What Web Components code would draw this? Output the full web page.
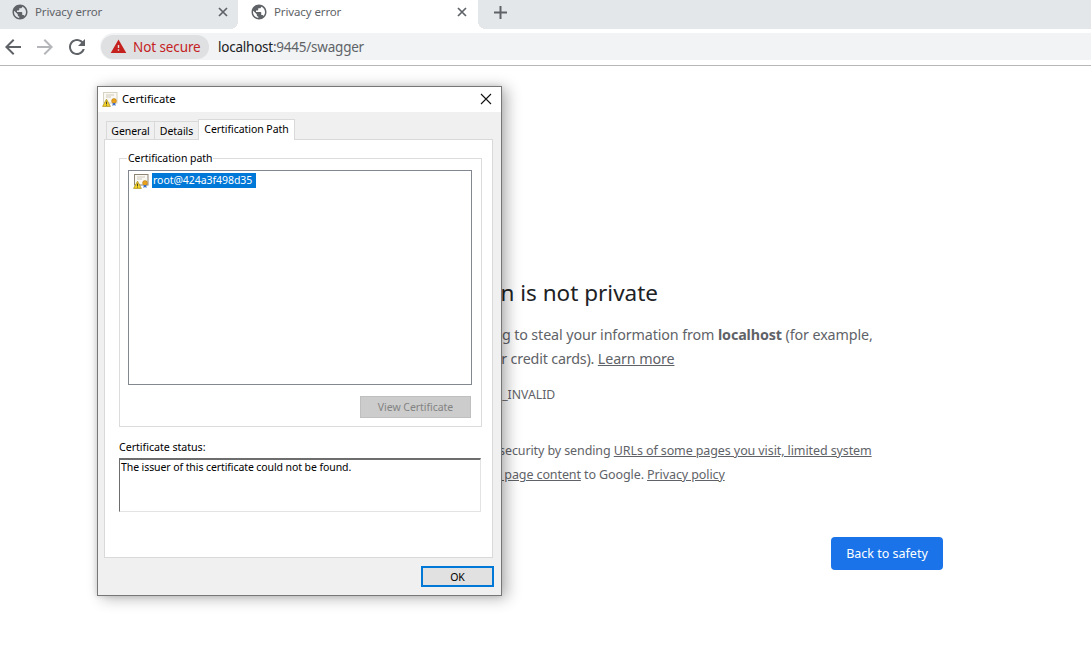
<!DOCTYPE html>
<html lang="en">
<head>
<meta charset="utf-8">
<title>Privacy error</title>
<style>
    html, body { margin: 0; height: 100%; background: #fff; overflow: hidden; }
    body { display: flex; flex-direction: column; font-family: "Noto Sans", sans-serif; position: relative; }
</style>
</head>
<body>
<browser-tabs>
    <browser-tab>Privacy error</browser-tab>
    <browser-tab active>Privacy error</browser-tab>
</browser-tabs>
<browser-toolbar url="localhost" path=":9445/swagger"></browser-toolbar>
<privacy-page></privacy-page>
<cert-dialog></cert-dialog>

<script>
const ICONS = {
    globe: 'M12 2C6.48 2 2 6.48 2 12s4.48 10 10 10 10-4.48 10-10S17.52 2 12 2zm-1 17.93c-3.95-.49-7-3.85-7-7.93 0-.62.08-1.21.21-1.79L9 15v1c0 1.1.9 2 2 2v1.93zm6.9-2.54c-.26-.81-1-1.39-1.9-1.39h-1v-3c0-.55-.45-1-1-1H8v-2h2c.55 0 1-.45 1-1V7h2c1.1 0 2-.9 2-2v-.41c2.93 1.19 5 4.06 5 7.41 0 2.08-.8 3.97-2.1 5.39z',
    back: 'M20 11H7.83l5.59-5.59L12 4l-8 8 8 8 1.41-1.41L7.83 13H20v-2z',
    forward: 'M12 4l-1.41 1.41L16.17 11H4v2h12.17l-5.58 5.59L12 20l8-8z',
    reload: 'M17.65 6.35C16.2 4.9 14.21 4 12 4c-4.42 0-7.99 3.58-7.99 8s3.57 8 7.99 8c3.73 0 6.84-2.55 7.73-6h-2.08c-.82 2.33-3.04 4-5.65 4-3.31 0-6-2.69-6-6s2.69-6 6-6c1.66 0 3.14.69 4.22 1.78L13 11h7V4l-2.35 2.35z',
    warning: 'M1 21h22L12 2 1 21zm12-3h-2v-2h2v2zm0-4h-2v-4h2v4z'
};

function icon(name, size, color) {
    return `<svg width="${size}" height="${size}" viewBox="0 0 24 24" fill="${color}" style="display:block;flex:none"><path d="${ICONS[name]}"/></svg>`;
}

function certIcon(edge) {
    return `<svg width="16" height="16" viewBox="0 0 16 16" style="display:block;flex:none">
        <rect x="1.5" y="1.5" width="13.5" height="10.5" fill="#faf8f2" stroke="${edge}"/>
        <path d="M4 4h8M4 6h5" stroke="#cfcabd"/>
        <circle cx="12" cy="10" r="2.4" fill="#e8a21c" stroke="#b97a10" stroke-width=".6"/>
        <path d="M10.8 12l-.4 3 1.6-1 1.6 1-.4-3z" fill="#3f6fc4"/>
        <path d="M4.5 8.2L.6 15.4h7.8z" fill="#f5d327" stroke="#a88a12" stroke-width=".7"/>
        <path d="M4.5 10.6v2.4M4.5 13.6v.9" stroke="#333" stroke-width=".9"/>
    </svg>`;
}

class BrowserTabs extends HTMLElement {
    constructor() {
        super();
        this.attachShadow({ mode: 'open' });
        this.shadowRoot.innerHTML = `
            <style>
                :host { display: flex; height: 29px; background: #e4e7ea; flex: none; }
                .new {
                    width: 44px; box-sizing: border-box; padding-bottom: 5px;
                    display: flex; align-items: center; justify-content: center;
                }
            </style>
            <slot></slot>
            <div class="new"><svg width="13" height="13" viewBox="0 0 13 13"><path d="M6.5 0v13M0 6.5h13" stroke="#5f6368" stroke-width="2"/></svg></div>
        `;
    }
}

class BrowserTab extends HTMLElement {
    constructor() {
        super();
        this.attachShadow({ mode: 'open' });
        this.shadowRoot.innerHTML = `
            <style>
                :host {
                    display: flex; align-items: center; box-sizing: border-box; position: relative;
                    width: 238px; height: 29px; padding: 0 9px 5px 12px; gap: 8px;
                    font-size: 11.5px; letter-spacing: -.12px; color: #5f6368;
                }
                :host([active]) { width: 240px; padding: 0 10px 5px 13px; background: #fff; }
                :host([active])::before, :host([active])::after {
                    content: ''; position: absolute; bottom: 0; width: 8px; height: 8px;
                }
                :host([active])::before { left: -8px; background: radial-gradient(circle at 0 0, transparent 8px, #fff 8px); }
                :host([active])::after { right: -8px; background: radial-gradient(circle at 100% 0, transparent 8px, #fff 8px); }
                .title { flex: 1; white-space: nowrap; margin-top: -2px; }
                .close { width: 12px; height: 12px; }
            </style>
            ${icon('globe', 18, '#5f6368').replace('display:block', 'display:block;margin:0 -1.5px')}
            <span class="title"><slot></slot></span>
            <svg class="close" viewBox="0 0 12 12"><path d="M2 2l8 8M10 2l-8 8" stroke="#5f6368" stroke-width="1.7"/></svg>
        `;
    }
}

class BrowserToolbar extends HTMLElement {
    constructor() {
        super();
        this.attachShadow({ mode: 'open' });
        this.shadowRoot.innerHTML = `
            <style>
                :host {
                    display: flex; align-items: flex-start; height: 37px; flex: none; box-sizing: border-box;
                    padding: 4px 0 0 1px; border-bottom: 1px solid #b7b7b7; background: #fff;
                }
                .nav { display: flex; gap: 8px; height: 27px; align-items: center; width: 99px; flex: none; }
                .omnibox {
                    flex: 1; height: 27px; background: #f1f3f4; border-radius: 14px 0 0 14px;
                    display: flex; align-items: center; gap: 9px; padding-left: 1px;
                    font-size: 13.5px; white-space: nowrap;
                }
                .chip {
                    display: flex; align-items: center; gap: 6px; height: 24px; width: 108px; box-sizing: border-box;
                    padding-left: 9px; background: #dfe0e2; border-radius: 12px; color: #c5221f; letter-spacing: -.1px;
                }
                .address { letter-spacing: -.23px; }
                .url { color: #202124; }
                .path { color: #5f6368; }
            </style>
            <div class="nav">
                ${icon('back', 24, '#5f6368')}
                ${icon('forward', 24, '#b4b6b9')}
                ${icon('reload', 24, '#5f6368')}
            </div>
            <div class="omnibox">
                <div class="chip">${icon('warning', 17, '#c5221f')}<span>Not secure</span></div>
                <div class="address"><span class="url"></span><span class="path"></span></div>
            </div>
        `;
    }

    connectedCallback() {
        this.shadowRoot.querySelector('.url').textContent = this.getAttribute('url');
        this.shadowRoot.querySelector('.path').textContent = this.getAttribute('path');
    }
}

class PrivacyPage extends HTMLElement {
    constructor() {
        super();
        this.attachShadow({ mode: 'open' });
        this.shadowRoot.innerHTML = `
            <style>
                :host {
                    display: block; flex: 1; box-sizing: border-box; padding: 212px 148px 0 343px;
                    color: #5f6368; font-size: 14.3px; line-height: 24px; letter-spacing: -.11px;
                }
                h1 { margin: 0 0 15px; font-size: 22.5px; font-weight: 400; line-height: 30px; color: #202124; letter-spacing: 0; }
                p { margin: 0; }
                a { color: inherit; text-decoration: underline; }
                b { font-weight: 700; }
                .tight { letter-spacing: -.18px; }
                .code { margin-top: 12px; font-size: 12.25px; letter-spacing: 0; }
                .covered { visibility: hidden; }
                .opt { margin-top: 32px; padding-left: 26px; font-size: 12.5px; letter-spacing: -.1px; }
                .actions { display: flex; justify-content: flex-end; margin-top: 50px; }
                button {
                    width: 112px; height: 33px; border: 0; border-radius: 4px; background: #1a73e8; color: #fff;
                    font: inherit; font-size: 12.5px;
                }
            </style>
            <h1>Your connection is not private</h1>
            <p>Attackers might be trying to steal your information from <b>localhost</b> (for example,<br><span class="tight">passwords, messages, or credit cards).</span> <a>Learn more</a></p>
            <p class="code"><span class="covered">NET::ERR_CERT_AUTHORITY</span>_INVALID</p>
            <p class="opt">Help improve Chrome security by sending <a>URLs of some pages you visit, limited system<br>information, and some page content</a> to Google. <a>Privacy policy</a></p>
            <div class="actions"><button>Back to safety</button></div>
        `;
    }
}

class CertDialog extends HTMLElement {
    constructor() {
        super();
        this.attachShadow({ mode: 'open' });
        this.shadowRoot.innerHTML = `
            <style>
                :host {
                    position: absolute; left: 97px; top: 86px; width: 405px; height: 510px; box-sizing: border-box;
                    display: flex; flex-direction: column; background: #f0f0f0; border: 1px solid #777;
                    box-shadow: 5px 2px 14px rgba(0,0,0,.3), -1px 0 5px rgba(0,0,0,.12);
                    font-size: 10.5px; color: #000; letter-spacing: -.05px;
                }
                .title { display: flex; align-items: center; gap: 4px; height: 25px; flex: none; background: #fff; padding: 0 0 2px 4px; box-sizing: border-box; font-size: 11.3px; }
                .title span { flex: 1; }
                .x { width: 16px; height: 16px; margin-right: 7px; }
                .tabs { display: flex; padding: 7px 0 0 8px; height: 20px; align-items: flex-end; flex: none; position: relative; z-index: 1; }
                .tab {
                    height: 18px; box-sizing: border-box; padding-top: 2px; border: 1px solid #d9d9d9; border-bottom: 0;
                    background: #f0f0f0; margin-right: -1px; white-space: nowrap; text-align: center;
                }
                .tab.on { height: 21px; padding-top: 2px; background: #fff; margin-bottom: -1px; }
                .panel {
                    margin: 0 8px 0 6px; height: 419px; box-sizing: border-box; flex: none;
                    background: #fff; border: 1px solid #d9d9d9; padding: 12px 10px 0 14px;
                }
                fieldset { margin: 0; height: 275px; box-sizing: border-box; border: 1px solid #dcdcdc; padding: 0 9px 0 8px; }
                legend { padding: 0 1px; margin-left: -1px; line-height: 13px; margin-bottom: 0; }
                .tree { height: 215px; box-sizing: border-box; border: 1px solid #828790; display: flex; align-items: flex-start; gap: 3px; padding: 2px 0 0 4px; margin-top: 5px; }
                .sel { background: #0078d7; color: #fff; padding: 0 2px 0 1px; line-height: 15px; width: 101px; }
                .row { display: flex; justify-content: flex-end; margin: 11px 1px 0 0; }
                .btn { width: 111px; height: 22px; box-sizing: border-box; border: 1px solid #bfbfbf; background: #ccc; color: #838383; display: flex; align-items: center; justify-content: center; }
                .status { margin-top: 13px; line-height: 14px; font-size: 10.7px; }
                .box { width: 362px; height: 54px; box-sizing: border-box; margin-top: 4px; border: 1px solid #e3e3e3; border-top: 2px solid #6d6d6d; border-left: 1px solid #6d6d6d; padding: 0 1px; line-height: 15px; letter-spacing: -.09px; }
                .foot { display: flex; justify-content: flex-end; padding: 8px 7px 0 0; }
                .ok { width: 73px; height: 21px; box-sizing: border-box; border: 2px solid #0078d7; background: #e1e1e1; display: flex; align-items: center; justify-content: center; }
            </style>
            <div class="title">
                ${certIcon('#d8d2c2')}<span>Certificate</span>
                <svg class="x" viewBox="0 0 16 16"><path d="M3 3l10 10M13 3L3 13" stroke="#111" stroke-width="1.1"/></svg>
            </div>
            <div class="tabs">
                <div class="tab" style="width:49px">General</div><div class="tab" style="width:45px">Details</div><div class="tab on" style="width:97px">Certification Path</div>
            </div>
            <div class="panel">
                <fieldset>
                    <legend>Certification path</legend>
                    <div class="tree">${certIcon('#8d8574')}<span class="sel">root@424a3f498d35</span></div>
                    <div class="row"><div class="btn">View Certificate</div></div>
                </fieldset>
                <div class="status">Certificate status:</div>
                <div class="box">The issuer of this certificate could not be found.</div>
            </div>
            <div class="foot"><div class="ok">OK</div></div>
        `;
    }
}

customElements.define('browser-tabs', BrowserTabs);
customElements.define('browser-tab', BrowserTab);
customElements.define('browser-toolbar', BrowserToolbar);
customElements.define('privacy-page', PrivacyPage);
customElements.define('cert-dialog', CertDialog);
</script>
</body>
</html>
